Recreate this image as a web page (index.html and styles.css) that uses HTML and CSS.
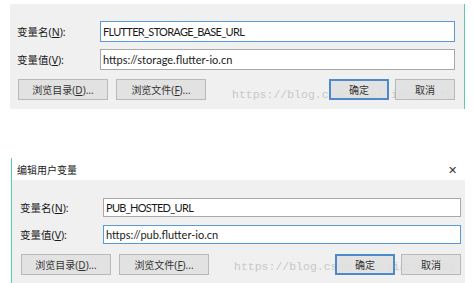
FILE: index.html
```html
<!DOCTYPE html>
<html lang="zh-CN">
<head>
    <meta charset="UTF-8">
    <title>编辑用户变量</title>
    <link rel="stylesheet" href="styles.css">
</head>
<body>
    <div class="panel panel-top">
        <div class="form-row first">
            <label class="field-label">变量名(<u>N</u>):</label>
            <div class="field focused caps">FLUTTER_STORAGE_BASE_URL</div>
        </div>
        <div class="form-row">
            <label class="field-label">变量值(<u>V</u>):</label>
            <div class="field">https://storage.flutter-io.cn</div>
        </div>
        <div class="button-row">
            <button class="btn btn-wide">浏览目录(<u>D</u>)...</button>
            <button class="btn btn-wide">浏览文件(<u>F</u>)...</button>
            <span class="spacer"></span>
            <button class="btn btn-small default">确定</button>
            <button class="btn btn-small">取消</button>
        </div>
        <span class="watermark">https://blog.csdn.net/jiangbo415</span>
    </div>

    <div class="dialog">
        <div class="title-bar">
            <span class="title">编辑用户变量</span>
            <span class="close">&#x2715;</span>
        </div>
        <div class="panel panel-body">
            <div class="form-row first">
                <label class="field-label">变量名(<u>N</u>):</label>
                <div class="field caps">PUB_HOSTED_URL</div>
            </div>
            <div class="form-row">
                <label class="field-label">变量值(<u>V</u>):</label>
                <div class="field focused">https://pub.flutter-io.cn</div>
            </div>
            <div class="button-row">
                <button class="btn btn-wide">浏览目录(<u>D</u>)...</button>
                <button class="btn btn-wide">浏览文件(<u>F</u>)...</button>
                <span class="spacer"></span>
                <button class="btn btn-small default">确定</button>
                <button class="btn btn-small">取消</button>
            </div>
            <span class="watermark">https://blog.csdn.net/jiangbo415</span>
        </div>
    </div>
</body>
</html>
```

FILE: styles.css
```css
body {
    margin: 0;
    background-color: #fff;
    font-family: 'Noto Sans', 'Noto Sans CJK SC', sans-serif;
    font-size: 10.5px;
    color: #1a1a1a;
    width: 474px;
    height: 283px;
    overflow: hidden;
}

.panel {
    position: relative;
    background-color: #f0f0f0;
    box-sizing: border-box;
}

.panel-top {
    margin: 4px 0 0 10px;
    width: 455px;
    height: 105px;
    padding: 17px 9px 0 7px;
    border-right: 1px solid #5cc9a7;
}

.form-row {
    display: flex;
    align-items: center;
    margin-top: 7px;
}

.form-row.first {
    margin-top: 0;
}

.field-label {
    width: 83px;
    flex-shrink: 0;
}

.field {
    flex: 1;
    height: 21px;
    box-sizing: border-box;
    border: 1px solid #a9a9a9;
    background-color: #fff;
    padding: 0 2px;
    line-height: 19px;
    font-family: Lato, 'Noto Sans', sans-serif;
    font-size: 11px;
    white-space: nowrap;
    overflow: hidden;
}

.field.caps {
    letter-spacing: -0.7px;
}

.field.focused {
    border-color: #5a9ad9;
}

.button-row {
    display: flex;
    align-items: center;
    margin-top: 9px;
    padding-left: 1px;
}

.spacer {
    flex: 1;
}

.btn {
    height: 21px;
    box-sizing: border-box;
    border: 1px solid #b4b4b4;
    background-color: #e1e1e1;
    font-family: inherit;
    font-size: 10px;
    color: #1a1a1a;
    padding: 0;
    position: relative;
    z-index: 1;
    opacity: 0.9;
}

.btn-wide {
    width: 90px;
    margin-right: 8px;
}

.btn-small {
    width: 60px;
    margin-left: 6px;
}

.btn.default {
    border: 2px solid #3b80c9;
}

.watermark {
    position: absolute;
    left: 222px;
    top: 84px;
    font-family: 'Liberation Mono', monospace;
    font-size: 11.5px;
    color: #c8c8c8;
}

.dialog {
    margin: 49px 0 0 11px;
    width: 453px;
    height: 125px;
    border-left: 1px solid #5cc9a7;
}

.title-bar {
    height: 22px;
    display: flex;
    align-items: center;
    justify-content: space-between;
    background-color: #fff;
    padding: 0 8px 0 5px;
}

.title {
    font-size: 10px;
}

.close {
    font-size: 11px;
    color: #333;
}

.panel-body {
    height: 103px;
    padding: 18px 4px 0 8px;
}

.panel-body .field {
    height: 19px;
    line-height: 17px;
}

.panel-body .form-row {
    margin-top: 8px;
}

.panel-body .form-row.first {
    margin-top: 0;
}

.panel-body .button-row {
    margin-top: 10px;
}

.panel-body .watermark {
    top: 80px;
}
```
